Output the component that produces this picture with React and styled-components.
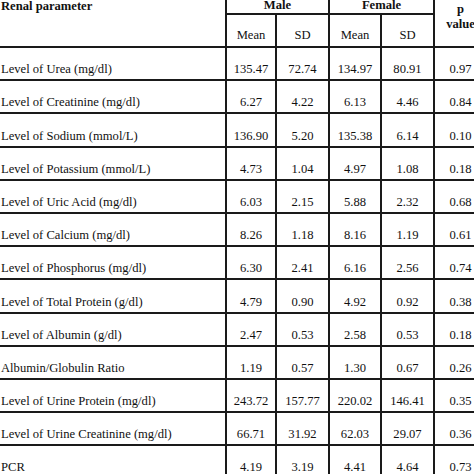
import React from 'react'
import styled, { createGlobalStyle } from 'styled-components'

const GlobalStyle = createGlobalStyle`
  html, body {
    margin: 0;
    padding: 0;
    background: #ffffff;
    overflow: hidden;
  }
`

const Page = styled.div`
  width: 474px;
  height: 474px;
  overflow: hidden;
  background: #ffffff;
`

const Table = styled.table`
  border-collapse: collapse;
  table-layout: fixed;
  width: 486px;
  margin-top: -3px;
  font-family: 'Liberation Serif', 'Times New Roman', serif;
  font-size: 12.6px;
  color: #111111;
`

const Col = styled.col`
  width: ${(p) => p.$w}px;
`

const Head = styled.th`
  height: 16px;
  font-weight: bold;
  line-height: 15px;
  padding: ${(p) => (p.$pad ? `${p.$pad}px` : '0')} 0 0 ${(p) => (p.$left ? '1px' : '0')};
  vertical-align: ${(p) => p.$align || 'top'};
  text-align: ${(p) => (p.$left ? 'left' : 'center')};
  border-left: ${(p) => (p.$left ? 'none' : '2px solid #1a1a1a')};
  border-bottom: 2px solid #1a1a1a;
`

const SubHead = styled.td`
  height: 27px;
  line-height: 14px;
  padding: 0 0 4px 0;
  vertical-align: bottom;
  text-align: center;
  border-left: 2px solid #1a1a1a;
  border-bottom: 2px solid #1a1a1a;
`

const Cell = styled.td`
  height: 28.2px;
  line-height: 14px;
  padding: 0 0 3px ${(p) => (p.$left ? '1px' : '0')};
  vertical-align: bottom;
  text-align: ${(p) => (p.$left ? 'left' : 'center')};
  border-left: ${(p) => (p.$left ? 'none' : '2px solid #1a1a1a')};
  border-bottom: 2px solid #1a1a1a;
  white-space: nowrap;
`

const widths = [226, 50, 53, 52, 53, 52]

const rows = [
  ['Level of Urea (mg/dl)', '135.47', '72.74', '134.97', '80.91', '0.97'],
  ['Level of Creatinine (mg/dl)', '6.27', '4.22', '6.13', '4.46', '0.84'],
  ['Level of Sodium (mmol/L)', '136.90', '5.20', '135.38', '6.14', '0.10'],
  ['Level of Potassium (mmol/L)', '4.73', '1.04', '4.97', '1.08', '0.18'],
  ['Level of Uric Acid (mg/dl)', '6.03', '2.15', '5.88', '2.32', '0.68'],
  ['Level of Calcium (mg/dl)', '8.26', '1.18', '8.16', '1.19', '0.61'],
  ['Level of Phosphorus (mg/dl)', '6.30', '2.41', '6.16', '2.56', '0.74'],
  ['Level of Total Protein (g/dl)', '4.79', '0.90', '4.92', '0.92', '0.38'],
  ['Level of Albumin (g/dl)', '2.47', '0.53', '2.58', '0.53', '0.18'],
  ['Albumin/Globulin Ratio', '1.19', '0.57', '1.30', '0.67', '0.26'],
  ['Level of Urine Protein (mg/dl)', '243.72', '157.77', '220.02', '146.41', '0.35'],
  ['Level of Urine Creatinine (mg/dl)', '66.71', '31.92', '62.03', '29.07', '0.36'],
  ['PCR', '4.19', '3.19', '4.41', '4.64', '0.73'],
]

const App = () => (
  <Page>
    <GlobalStyle />
    <Table>
      <colgroup>
        {widths.map((w, i) => (
          <Col key={i} $w={w} />
        ))}
      </colgroup>
      <thead>
        <tr>
          <Head rowSpan={2} $left $pad={2}>
            Renal parameter
          </Head>
          <Head colSpan={2} $align="middle">Male</Head>
          <Head colSpan={2} $align="middle">Female</Head>
          <Head rowSpan={2} $pad={5}>
            p<br />value
          </Head>
        </tr>
        <tr>
          <SubHead>Mean</SubHead>
          <SubHead>SD</SubHead>
          <SubHead>Mean</SubHead>
          <SubHead>SD</SubHead>
        </tr>
      </thead>
      <tbody>
        {rows.map((r) => (
          <tr key={r[0]}>
            {r.map((v, i) => (
              <Cell key={i} $left={i === 0}>
                {v}
              </Cell>
            ))}
          </tr>
        ))}
      </tbody>
    </Table>
  </Page>
)

export default App
